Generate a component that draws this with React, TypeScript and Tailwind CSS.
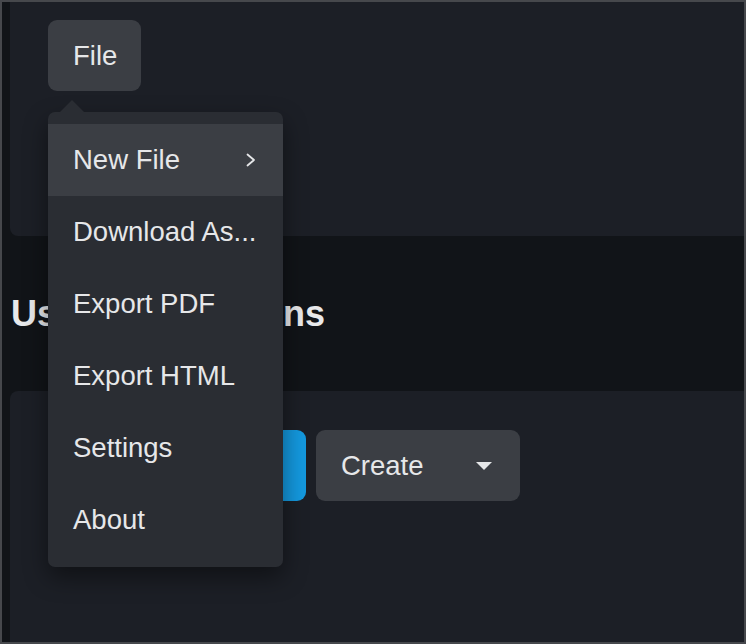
const ITEMS = ["New File", "Download As...", "Export PDF", "Export HTML", "Settings", "About"];

function FileMenu() {
  return (
    <div className="absolute left-[38px] top-[110px] z-10 w-[235px]">
      {/* little pointer above the menu */}
      <svg className="absolute -top-[12px] left-[12px]" width="24" height="12" viewBox="0 0 24 12">
        <polygon points="0,12 12,0 24,12" fill="#2a2d33" />
      </svg>
      <div className="rounded-[7px] bg-[#2a2d33] pt-[12px] pb-[11px] shadow-[0_10px_24px_rgba(0,0,0,0.45)]">
        {ITEMS.map((item, i) => (
          <div
            key={item}
            className={`flex h-[72px] items-center justify-between whitespace-nowrap pl-[25px] pr-[27px] text-[27.5px] text-[#e6e7e9] ${
              i === 0 ? "bg-[#3b3e44]" : ""
            }`}
          >
            <span>{item}</span>
            {i === 0 && (
              <svg width="10" height="14" viewBox="0 0 10 14">
                <polyline
                  points="1.5,1.5 8,7 1.5,12.5"
                  fill="none"
                  stroke="#e6e7e9"
                  strokeWidth="1.8"
                  strokeLinecap="round"
                  strokeLinejoin="round"
                />
              </svg>
            )}
          </div>
        ))}
      </div>
    </div>
  );
}

export default function App() {
  return (
    <div
      className="flex h-[644px] w-[746px] flex-col overflow-hidden border-2 border-[#46484c] bg-[#111418] pl-2"
      style={{ fontFamily: '"Liberation Sans", Arial, sans-serif' }}
    >
      {/* top demo card */}
      <div className="relative h-[234px] shrink-0 rounded-bl-[8px] bg-[#1c1f26] pl-[38px] pt-[18px]">
        <button className="flex h-[71px] w-[93px] items-center rounded-[9px] bg-[#3b3e44] pl-[25px] text-[27.5px] text-[#e6e7e9]">
          File
        </button>
        <FileMenu />
      </div>

      {/* section heading */}
      <div className="flex h-[155px] shrink-0 items-center pl-[1px]">
        <h2 className="text-[36px] font-bold text-[#e8e9eb]">Usage via Buttons</h2>
      </div>

      {/* second demo card */}
      <div className="flex-1 rounded-tl-[8px] bg-[#1c1f26] pl-[38px] pt-[39px]">
        <div className="flex gap-[10px]">
          <button className="h-[71px] w-[258px] rounded-[9px] bg-[#1499df] text-[27.5px] text-white">
            Primary
          </button>
          <button className="flex h-[71px] w-[204px] items-center justify-between rounded-[9px] bg-[#3b3e44] pl-[25px] pr-[28px] text-[27.5px] text-[#e6e7e9]">
            <span>Create</span>
            <svg width="16" height="8" viewBox="0 0 16 8">
              <polygon points="0,0 16,0 8,8" fill="#e6e7e9" />
            </svg>
          </button>
        </div>
      </div>
    </div>
  );
}
